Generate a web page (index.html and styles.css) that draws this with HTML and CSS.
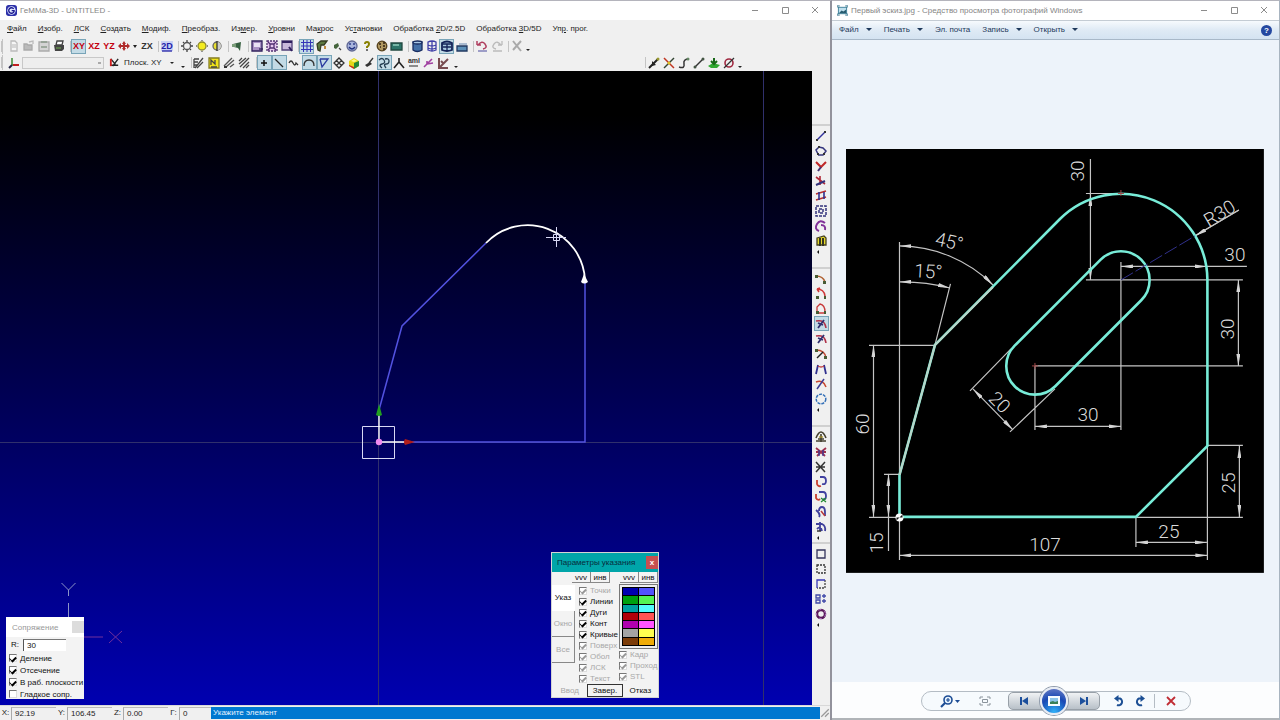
FILE: index.html
```
<!DOCTYPE html>
<html lang="ru">
	<head>
		<meta charset="utf-8">
		<title>ГеММа-3D</title>
		<link rel="stylesheet" href="styles.css">
	</head>
	<body>
		<main class="desktop">
			<!-- CAD -->
			<section class="window cad">
				<header class="titlebar">
					<svg class="app-icon" viewBox="0 0 12 12"><rect width="12" height="12" rx="3" fill="#2b2fa8"/><circle cx="6" cy="6" r="4.6" fill="#dfe6ff"/><path d="M8.4 4.3A3 3 0 1 0 8.8 7V6.2H6.2" fill="none" stroke="#1c1c90" stroke-width="1.5"/></svg>
					<h1>ГеММа-3D - UNTITLED -</h1>
					<div class="win-buttons">
						<button aria-label="Свернуть"><svg viewBox="0 0 10 10"><path d="M2 5.5h6"/></svg></button>
						<button aria-label="Развернуть"><svg viewBox="0 0 10 10"><path d="M2.500 2.500h6v6h-6z"/></svg></button>
						<button aria-label="Закрыть"><svg viewBox="0 0 10 10"><path d="M2 2l6 6M8 2l-6 6"/></svg></button>
					</div>
				</header>
				<nav class="menu">
					<button><u>Ф</u>айл</button>
					<button><u>И</u>зобр.</button>
					<button><u>Л</u>СК</button>
					<button><u>С</u>оздать</button>
					<button><u>М</u>одиф.</button>
					<button><u>П</u>реобраз.</button>
					<button>Из<u>м</u>ер.</button>
					<button><u>У</u>ровни</button>
					<button>Ма<u>к</u>рос</button>
					<button>Ус<u>т</u>ановки</button>
					<button>Обработка <u>2</u>D/2.5D</button>
					<button>Обработка <u>3</u>D/5D</button>
					<button>Уп<u>р</u>. прог.</button>
				</nav>
				<div class="toolbar">
					<div class="group first" data-icons="new open save print"></div>
					<div class="group" data-icons="*xy xz yz move drop zx"></div>
					<div class="group" data-icons="2d"></div>
					<div class="group" data-icons="sun bulb half"></div>
					<div class="group" data-icons="leaf"></div>
					<div class="group" data-icons="screen frame view"></div>
					<div class="group" data-icons="*grid layer pen face help cookie card"></div>
					<div class="group" data-icons="cyl wire *book flat"></div>
					<div class="group" data-icons="undo redo"></div>
					<div class="group" data-icons="cut more"></div>
				</div>
				<div class="toolbar">
					<div class="group first" data-icons="axis"></div>
					<select class="lcs" aria-label="ЛСК"><option></option></select>
					<button class="plane"><svg viewBox="0 0 12 12"><path d="M2 2l5 6M2 9h8M4 10l6-8" stroke="#222" stroke-width="1.5"/><path d="M2 2v8" stroke="#d02020" stroke-width="2"/></svg>Плоск. XY <i></i></button>
					<div class="group plain" data-icons="more"></div>
					<div class="group" data-icons="hatch nc brush lines"></div>
					<div class="group" data-icons="*plus *line wave *arc *tri diamond cube dart *spiral angle aml branch fan more"></div>
					<div class="group snaps" data-icons="snap cross curve seg hill nosnap more"></div>
				</div>
				<div class="work">
					<div class="canvas">
						<svg class="drawing" viewBox="0 71 812 634" preserveAspectRatio="xMinYMin slice">
							<path class="guide" d="M378.5 71v634M763.5 71v634M0 442.5h812"/>
							<path class="contour" d="M379 410L402 326L486 243M585 282V442H412"/>
							<path class="picked" d="M486 243A57.5 57.5 0 0 1 585 280"/>
							<path d="M584 274l-3 8q3 3 7 0z" fill="#fff"/>
							<path class="cursor" d="M556.5 227v20M546 237.5h20M553.5 234.5h6v6h-6z"/>
							<path class="cursor" d="M362.5 426.5h32v32h-32z"/>
							<path d="M379 442v-28M379 442h26" stroke="#fff" stroke-width="1.4"/>
							<path d="M379 404l3 11q-3 2-6 0z" fill="#22a020"/>
							<path d="M415 442l-10-3q-2 3 0 6z" fill="#b01c18"/>
							<circle cx="379" cy="442" r="3.2" fill="#f08af0"/>
							<path class="axis-y" d="M61.500 583l7 7 7-7M68.500 590v6M68.500 603v14"/>
							<path class="axis-x" d="M84 637h19M109 631l13 12M122 631l-13 12"/>
						</svg>

						<form class="panel fillet">
							<div class="panel-title">Сопряжение<button type="button" aria-label="Закрыть"></button></div>
							<label class="radius">R: <input type="text" value="30"></label>
							<label><input type="checkbox" checked>Деление</label>
							<label><input type="checkbox" checked>Отсечение</label>
							<label><input type="checkbox" checked>В раб. плоскости</label>
							<label><input type="checkbox">Гладкое сопр.</label>
						</form>

						<form class="panel pick">
							<div class="panel-title">Параметры указания<button type="button" aria-label="Закрыть">x</button></div>
							<div class="pick-heads">
								<button type="button">vvv</button><button type="button">инв</button>
								<button type="button" class="apart">vvv</button><button type="button">инв</button>
							</div>
							<div class="pick-body">
								<div class="tabs">
									<button type="button" class="on">Указ</button>
									<button type="button" disabled>Окно</button>
									<button type="button" disabled>Все</button>
								</div>
								<div class="kinds">
									<label class="off"><input type="checkbox" checked disabled>Точки</label>
									<label><input type="checkbox" checked>Линии</label>
									<label><input type="checkbox" checked>Дуги</label>
									<label><input type="checkbox" checked>Конт</label>
									<label><input type="checkbox" checked>Кривые</label>
									<label class="off"><input type="checkbox" checked disabled>Поверх</label>
									<label class="off"><input type="checkbox" checked disabled>Обол</label>
									<label class="off"><input type="checkbox" checked disabled>ЛСК</label>
									<label class="off"><input type="checkbox" checked disabled>Текст</label>
								</div>
								<div class="kinds">
									<div class="palette">
										<b class="navy"></b><b class="blue"></b>
										<b class="green"></b><b class="lime"></b>
										<b class="teal"></b><b class="aqua"></b>
										<b class="red"></b><b class="coral"></b>
										<b class="purple"></b><b class="pink"></b>
										<b class="grey"></b><b class="yellow"></b>
										<b class="brown"></b><b class="orange"></b>
									</div>
									<label class="off"><input type="checkbox" checked disabled>Кадр</label>
									<label class="off"><input type="checkbox" checked disabled>Проход</label>
									<label class="off"><input type="checkbox" checked disabled>STL</label>
								</div>
							</div>
							<div class="pick-foot">
								<button type="button" disabled>Ввод</button>
								<button type="button" class="default">Завер.</button>
								<button type="button">Отказ</button>
							</div>
						</form>
					</div>
					<aside class="sidebar">
						<div class="group" data-icons="vline poly trim fork para region loop block back"></div>
						<div class="group" data-icons="arc1 arc2 arc3 *fillet fillet arc4 legs split ring back"></div>
						<div class="group mid" data-icons="tree bug scis hook1 hook2 hook3 hook4 back"></div>
						<div class="group" data-icons="sq sqdot sqmix nodes torus back"></div>
					</aside>
				</div>
				<footer class="status">
					<span>X:</span><output>92.19</output>
					<span>Y:</span><output>106.45</output>
					<span>Z:</span><output>0.00</output>
					<span>Г:</span><output class="short">0</output>
					<p>Укажите элемент</p>
					<svg class="size-grip" viewBox="0 0 8 8"><path d="M7 1L1 7M7 4L4 7" stroke="#999"/></svg>
				</footer>
			</section>

			<!-- просмотр фотографий -->
			<section class="window viewer">
				<header class="titlebar">
					<svg class="app-icon" viewBox="0 0 12 12"><rect x="1.500" y="2.500" width="9" height="7" fill="#bfe0ee" stroke="#3c7f98"/><path d="M2 9l3-3 2 1 3-2v4z" fill="#285c70"/><path d="M0 3V1h3M9 1h3v2M0 9v2h3M9 11h3V9" fill="none" stroke="#2c6f88"/></svg>
					<h1>Первый эскиз.jpg - Средство просмотра фотографий Windows</h1>
					<div class="win-buttons">
						<button aria-label="Свернуть"><svg viewBox="0 0 10 10"><path d="M2 5.500h6"/></svg></button>
						<button aria-label="Развернуть"><svg viewBox="0 0 10 10"><path d="M2.500 2.500h6v6h-6z"/></svg></button>
						<button aria-label="Закрыть"><svg viewBox="0 0 10 10"><path d="M2 2l6 6M8 2l-6 6"/></svg></button>
					</div>
				</header>
				<nav class="viewer-menu">
					<button>Файл<i></i></button>
					<button>Печать<i></i></button>
					<button>Эл. почта</button>
					<button>Запись<i></i></button>
					<button>Открыть<i></i></button>
					<button class="help" aria-label="Справка">?</button>
				</nav>
				<div class="photo">
					<svg viewBox="846 149 418 424">
						<defs>
							<marker id="arrow" viewBox="0 0 12 4" refX="12" refY="2" markerWidth="12" markerHeight="4" markerUnits="userSpaceOnUse" orient="auto-start-reverse"><path d="M12 2L0 0v4z" fill="#d4d4d4"/></marker>
						</defs>
						<rect x="846" y="149" width="418" height="424"/>
						<g class="dim">
							<path d="M899.500 242V560M869 345.500h66M869 517.500h374M884 474.500h16M1207.500 446v114M1136 517v30M1207 445.500h36M1035 366h208M1121 262v168M1035 366v64M1086 280h157M1086 193.500h35M935 345l15.500-61M1011 349l-41 42M1055 389l-45 43M1090.500 159v36M1207 266.500h40M888.500 516v35M1195 236l44-26"/>
							<g marker-start="url(#arrow)" marker-end="url(#arrow)">
								<path d="M899.500 246A134 134 0 0 1 993 285"/>
								<path d="M899.500 282A193 193 0 0 1 950 288"/>
								<path d="M1090.500 194v86"/>
								<path d="M1121 266.500h86"/>
								<path d="M1238.500 280v86"/>
								<path d="M1035 426.500h86"/>
								<path d="M973 389l40 41"/>
								<path d="M873.500 345v172"/>
								<path d="M888.500 474v43"/>
								<path d="M899.500 555.500h308"/>
								<path d="M1136 542.500h71"/>
								<path d="M1239.500 446v71"/>
							</g>
							<path d="M1239 210L1195 236" marker-end="url(#arrow)"/>
						</g>
						<path class="part" d="M899.500 517V475L935 345L1060 219A86.500 86.500 0 0 1 1207.500 280V446L1136 517Z"/>
						<path class="part" d="M1100.700 259.700A28.700 28.700 0 0 1 1141.300 300.300L1055.300 386.300A28.700 28.700 0 0 1 1014.700 345.700Z"/>
						<path d="M899.500 475L935 345L993 287" fill="none" stroke="#b9d5c8" stroke-width="2"/>
						<path d="M1121 280L1195 236" stroke="#30308c" stroke-dasharray="14 3"/>
						<path d="M1118 193.500h6M1121 190v6M1032 366h6M1035 363v6" stroke="#a04848"/>
						<circle cx="899.500" cy="517.500" r="4" fill="#fff"/>
						<path d="M899.500 517.500h3v-3zM899.500 517.500h-3v3z" fill="#111"/>
						<g class="dim-text">
							<text transform="translate(1084 171) rotate(-90)">30</text>
							<text x="1235" y="261">30</text>
							<text transform="translate(1234 329) rotate(-90)">30</text>
							<text transform="translate(869 424) rotate(-90)">60</text>
							<text transform="translate(883 543) rotate(-90)">15</text>
							<text transform="translate(1235 483) rotate(-90)">25</text>
							<text x="1088" y="421">30</text>
							<text x="1045" y="551">107</text>
							<text x="1169" y="538">25</text>
							<text transform="translate(928 278) rotate(3)">15°</text>
							<text transform="translate(948 248) rotate(12)">45°</text>
							<text transform="translate(995 407) rotate(45)">20</text>
							<text transform="translate(1223 219) rotate(-31)">R30</text>
						</g>
					</svg>
				</div>
				<footer class="controls">
					<div class="pill">
						<button aria-label="Масштаб"><svg class="wide" viewBox="0 0 20 14"><circle cx="8" cy="6" r="4" fill="#e8f4ff" stroke="#1c4c94" stroke-width="1.600"/><path d="M5 9l-4 4" stroke="#1c4c94" stroke-width="2.200"/><path d="M6 6h4M8 4v4" stroke="#1c4c94" stroke-width="1.200"/><path d="M15 6h5l-2.500 3z" fill="#1c4c94"/></svg></button>
						<button class="fit" aria-label="По размеру окна"><svg viewBox="0 0 14 14"><path d="M2 5V3h3M9 3h3v2M2 9v2h3M9 11h3V9M4.500 5.500h5v3h-5z" fill="none" stroke="#8b949c"/></svg></button>
						<div class="player">
							<button aria-label="Назад"><svg viewBox="0 0 14 14"><path d="M3 3h2v8H3zM11 3v8L5 7z" fill="#1c4f9c"/></svg></button>
							<button class="show" aria-label="Показ слайдов"><svg viewBox="0 0 14 14"><path d="M1 2h12v10H1z" fill="#f6fbff"/><path d="M3 4h8v6H3z" fill="#8cc4e8"/><path d="M3 10V8l3-1 2 1 3-1v3z" fill="#3a8058"/></svg></button>
							<button aria-label="Вперед"><svg viewBox="0 0 14 14"><path d="M9 3h2v8H9zM3 3v8l6-4z" fill="#1c4f9c"/></svg></button>
						</div>
						<button aria-label="Повернуть влево"><svg viewBox="0 0 14 14"><path d="M5 4.500H8a3.500 3.500 0 1 1-3 6.500" fill="none" stroke="#1c4f94" stroke-width="2"/><path d="M2 4.500L6.500 1v7z" fill="#1c4f94"/></svg></button>
						<button aria-label="Повернуть вправо"><svg viewBox="0 0 14 14"><path d="M9 4.500H6a3.500 3.500 0 1 0 3 6.500" fill="none" stroke="#1c4f94" stroke-width="2"/><path d="M12 4.500L7.500 1v7z" fill="#1c4f94"/></svg></button>
						<button class="delete" aria-label="Удалить"><svg viewBox="0 0 14 14"><path d="M3 3l8 8M11 3l-8 8" stroke="#c02c34" stroke-width="1.800"/></svg></button>
					</div>
				</footer>
			</section>
		</main>
		<script src="toolbar.js"></script>
	</body>
</html>
```
FILE: styles.css
```
*{
	box-sizing: border-box;
	margin: 0;
	padding: 0;
}
body{
	font: 8px/12px "Liberation Sans", sans-serif;
	color: #222;
	background-color: #f0f0f0;
}
button, input, select{
	font: inherit;
	color: inherit;
	border: none;
	background: none;
}
.desktop{
	display: flex;
	height: 100vh;
	min-height: 640px;
}
.window{
	display: flex;
	flex-direction: column;
	min-width: 0;
	border-top: 1px solid #b4b4bc;
}
.cad{
	flex: 0 0 65%;
	background-color: #f0f0f0;
	border-right: 2px solid #92929c;
}
.viewer{
	flex: 1;
	background-color: #edf3fa;
	border-right: 1px solid #a8b4c0;
}

/* заголовок */
.titlebar{
	display: flex;
	align-items: center;
	height: 19px;
	padding-left: 6px;
	background-color: #fff;
	color: #858585;
}
.titlebar h1{
	flex: 1;
	font-size: 8px;
	font-weight: normal;
	white-space: nowrap;
}
.app-icon{
	width: 11px;
	height: 11px;
	margin-right: 3px;
}
.win-buttons{
	display: flex;
}
.win-buttons button{
	width: 30px;
	height: 18px;
}
.win-buttons svg{
	width: 10px;
	height: 10px;
	fill: none;
	stroke: #8c8c8c;
	vertical-align: middle;
}
.viewer .titlebar{
	padding-left: 5px;
}

/* меню */
.menu{
	display: flex;
	gap: 11px;
	height: 18px;
	padding-left: 7px;
	white-space: nowrap;
}

/* панели инструментов */
.toolbar{
	display: flex;
	align-items: center;
	gap: 5px;
	height: 16px;
	padding-left: 2px;
}
.toolbar + .toolbar{
	height: 17px;
}
.group{
	display: flex;
	align-items: center;
}
.toolbar .group{
	box-shadow: -3px 0 0 -2px #c4c4c4;
}
.toolbar .group.first{
	padding-left: 3px;
	border-left: 1px solid #c4c4c4;
}
.toolbar .plain{
	box-shadow: none;
}
.tool{
	display: flex;
	align-items: center;
	justify-content: center;
	width: 15px;
	height: 15px;
}
.tool svg{
	flex: none;
	width: 12px;
	height: 12px;
	fill: none;
	stroke-width: 1.3;
	overflow: visible;
}
.tool text{
	font: bold 9px "Liberation Sans", sans-serif;
	text-anchor: middle;
}
.tool .small{
	font-size: 7px;
}
.tool.narrow{
	width: 8px;
}
.tool.pressed{
	background-color: #c3dbe6;
	box-shadow: inset 0 0 0 1px #78a4b8;
}
.lcs{
	appearance: none;
	width: 82px;
	height: 12px;
	margin-left: -4px;
	border: 1px solid #c8c8c8;
	background: linear-gradient(#aaa, #aaa) no-repeat 75px 4px/3px 2px #eee;
}
.plane{
	display: flex;
	align-items: center;
	white-space: nowrap;
}
.plane svg{
	width: 11px;
	height: 11px;
	margin-right: 4px;
}
.plane i{
	margin-left: 8px;
	border: 2px solid transparent;
	border-top-color: #222;
	border-bottom: none;
}
.snaps{
	margin-left: auto;
	margin-right: 86px;
}

/* рабочее поле */
.work{
	display: flex;
	flex: 1;
	min-height: 0;
}
.canvas{
	flex: 1;
	position: relative;
	overflow: hidden;
	background: linear-gradient(#000 7%, #0000b0);
}
.drawing{
	display: block;
	width: 100%;
	height: 100%;
	fill: none;
}
.guide{
	stroke: #30306c;
}
.contour{
	stroke: #5252e0;
	stroke-width: 1.5;
}
.picked{
	stroke: #fff;
	stroke-width: 1.8;
}
.cursor{
	stroke: #d8d8f4;
}
.axis-y{
	stroke: #8c94c8;
}
.axis-x{
	stroke: #70309c;
}
.sidebar{
	width: 18px;
	padding-top: 53px;
	background-color: #f0f0f0;
}
.sidebar .group{
	flex-direction: column;
	padding-top: 2px;
	margin-bottom: 11px;
	border-top: 2px solid #d0d0d0;
}
.sidebar .narrow{
	height: 8px;
}
.sidebar .mid{
	margin-bottom: 0;
}

/* плавающие окна */
.panel{
	position: absolute;
	line-height: 11px;
	background-color: #f3f3f3;
	color: #111;
}
.panel-title{
	display: flex;
	align-items: center;
	justify-content: space-between;
}
.panel label{
	display: flex;
	align-items: center;
	white-space: nowrap;
}
.panel input[type=checkbox]{
	appearance: none;
	display: grid;
	place-content: center;
	flex: none;
	width: 8px;
	height: 8px;
	margin-right: 3px;
	border: 1px solid #777;
	border-right-color: #ddd;
	border-bottom-color: #ddd;
	background-color: #fff;
}
.panel input:checked::before{
	content: "";
	width: 5px;
	height: 3px;
	border-left: 1px solid #000;
	border-bottom: 2px solid #000;
	transform: rotate(-45deg);
}
.panel .off, .panel button:disabled{
	color: #a8a8a8;
}
.panel .off input::before{
	border-color: #999;
}
.fillet{
	left: 6px;
	bottom: 6px;
	width: 78px;
	height: 82px;
	overflow: hidden;
}
.fillet .panel-title{
	height: 20px;
	padding-left: 6px;
	background-color: #fff;
	color: #999;
}
.fillet .panel-title button{
	width: 12px;
	height: 12px;
	background-color: #dcdcdc;
}
.fillet label{
	height: 12px;
	padding-left: 3px;
}
.fillet .radius{
	height: 15px;
	padding-left: 5px;
	gap: 4px;
}
.radius input{
	width: 43px;
	height: 12px;
	padding-left: 3px;
	border-left: 1px solid #555;
	border-top: 1px solid #777;
	background-color: #fff;
}
.pick{
	left: 551px;
	bottom: 7px;
	width: 108px;
	border: 1px solid #d4d4d4;
}
.pick .panel-title{
	height: 19px;
	padding-left: 5px;
	background-color: #00a5a9;
	color: #082c3c;
}
.pick .panel-title button{
	width: 12px;
	height: 13px;
	background-color: #c75050;
	color: #fff;
	font-weight: bold;
}
.pick-heads{
	display: flex;
	justify-content: flex-end;
	height: 11px;
}
.pick-heads button{
	width: 19px;
	border-right: 1px solid #888;
	border-bottom: 1px solid #888;
	line-height: 9px;
}
.pick-heads .apart{
	margin-left: 10px;
}
.pick-body{
	display: grid;
	grid-template-columns: 23px 36px 39px;
	gap: 4px;
	padding-top: 2px;
}
.tabs button{
	display: block;
	width: 23px;
	height: 26px;
	border-right: 1px solid #888;
	border-bottom: 1px solid #888;
}
.tabs .on{
	background-color: #fff;
	border-color: #fff;
}
.kinds label{
	height: 11px;
}
.palette{
	display: grid;
	grid-template-columns: 1fr 1fr;
	gap: 1px;
	height: 65px;
	margin-top: -1px;
	padding: 3px;
	border: 1px solid #777;
	background: #eee;
}
.palette b{
	box-shadow: 0 0 0 1px #000;
}
.navy{background-color: #0000b0;}
.blue{background-color: #5252ff;}
.green{background-color: #00a010;}
.lime{background-color: #54f454;}
.teal{background-color: #00a0a0;}
.aqua{background-color: #54fcfc;}
.red{background-color: #b00008;}
.coral{background-color: #ff5454;}
.purple{background-color: #b000b0;}
.pink{background-color: #ff54ff;}
.grey{background-color: #a4a4a4;}
.yellow{background-color: #ffff50;}
.brown{background-color: #7c3c08;}
.orange{background-color: #f0ac08;}
.pick-foot{
	display: grid;
	grid-template-columns: 1fr 1fr 1fr;
	height: 13px;
}
.pick-foot .default{
	border: 1px solid #333;
}

/* строка состояния */
.status{
	display: flex;
	align-items: center;
	height: 15px;
	border-top: 1px solid #d8d8d8;
}
.status span{
	width: 11px;
	text-align: center;
}
.status output{
	width: 45px;
	height: 13px;
	padding-left: 3px;
	border-left: 1px solid #aaa;
	border-top: 1px solid #bbb;
}
.status .short{
	width: 32px;
}
.status p{
	flex: 1;
	padding-left: 2px;
	background-color: #0078d0;
	color: #e4f2ff;
}
.size-grip{
	width: 10px;
	height: 10px;
}

/* просмотр */
.viewer-menu{
	display: flex;
	align-items: center;
	gap: 12px;
	height: 20px;
	padding: 0 7px;
	border-top: 1px solid #c4ccd4;
	border-bottom: 1px solid #a8b8c8;
	background: linear-gradient(#f6fafd, #dfeaf5 50%, #d4e3f1);
	color: #1e395b;
}
.viewer-menu i{
	display: inline-block;
	margin-left: 7px;
	border: 3px solid transparent;
	border-top-color: #1e395b;
	border-bottom: none;
	vertical-align: middle;
}
.viewer-menu .help{
	width: 11px;
	height: 11px;
	margin-left: auto;
	border-radius: 50%;
	background-color: #2448a0;
	color: #fff;
	font-weight: bold;
	line-height: 11px;
}
.photo{
	flex: 1;
	display: flex;
	align-items: center;
	justify-content: center;
	min-height: 0;
	padding-right: 1px;
}
.photo svg{
	width: 93.7%;
	max-height: 100%;
}
.dim{
	fill: none;
	stroke: #c4c4c4;
	stroke-width: 1.2;
}
.part{
	fill: none;
	stroke: #78ecd8;
	stroke-width: 2.6;
}
.dim-text{
	font: 300 19px "Roboto", sans-serif;
	fill: #dcdcdc;
	text-anchor: middle;
}
.controls{
	display: flex;
	align-items: center;
	justify-content: center;
	height: 38px;
	padding-top: 2px;
	border-bottom: 2px solid #b0b4b8;
	background-color: #fcfdfe;
}
.pill{
	display: flex;
	align-items: center;
	width: 270px;
	height: 20px;
	padding: 0 9px 0 18px;
	border: 1px solid #b4bcc4;
	border-radius: 10px;
	background-color: #f6fafd;
}
.pill svg{
	display: block;
	width: 14px;
	height: 14px;
	margin: auto;
}
.pill .wide{
	width: 20px;
}
.pill > button{
	width: 22px;
}
.pill .fit{
	margin: 0 14px 0 15px;
}
.player{
	display: flex;
	align-items: center;
	justify-content: space-between;
	width: 98px;
	height: 18px;
	margin-left: -2px;
	margin-right: 9px;
	border: 1px solid #98a0a8;
	border-radius: 5px;
	background: linear-gradient(#f0f2f4, #b8c0c8);
}
.player button{
	width: 30px;
}
.player .show{
	width: 28px;
	height: 28px;
	margin: -5px 0;
	border: 2px solid #e8ecf4;
	border-radius: 50%;
	background: radial-gradient(circle at 50% 95%, #30b0f8, #1848b4 55%, #7484c8);
	box-shadow: 0 0 0 1px #909cac;
}
.pill .delete{
	margin-left: 4px;
	padding-left: 6px;
	border-left: 1px solid #b4bcc4;
	width: 28px;
}
```
FILE: toolbar.js
```
// содержимое значков, поле 12x12
var icons = {
	"new": '<path d="M3 1h4l2 2v8H3z" stroke="#bbb" fill="#f6f6f6"/><path d="M4 5h4M4 7h4" stroke="#ccc"/>',
	open: '<path d="M1 10V4h3l1 1h4v5z" fill="#bbb" stroke="#aaa"/><path d="M6 2l4-1v3" stroke="#bbb"/>',
	save: '<path d="M1 2h10v9H1z" fill="#d4d4d4" stroke="#aaa"/><path d="M3 2h6M3 7h6" stroke="#8a9a8a"/>',
	print: '<path d="M3 5l1-4h6L9 5z" fill="#fff" stroke="#444"/><path d="M1 5h10v4l-2 2H2z" fill="#444"/><path d="M3 8h5" stroke="#6a9a50"/>',
	xy: '<text x="6" y="9" fill="#c40010">XY</text>',
	xz: '<text x="6" y="9" fill="#c40010">XZ</text>',
	yz: '<text x="6" y="9" fill="#c40010">YZ</text>',
	zx: '<text class="mid" x="6" y="9" fill="#333">ZX</text>',
	"2d": '<path d="M0 1h12v10H0z" fill="#c8d0f4"/><text x="6" y="9" fill="#2020a8">2D</text><path d="M1 11h10" stroke="#2020a8"/>',
	move: '<path d="M0 6l3-3v2h2V4H4l2-3 2 3H7v1h2V3l3 3-3 3V7H7v1h1l-2 3-2-3h1V7H3v2z" fill="#b02c2c"/>',
	drop: '<path d="M4 5h4l-2 3z" fill="#222"/>',
	sun: '<circle cx="6" cy="6" r="3.500" stroke="#555"/><path d="M6 0v2M6 10v2M0 6h2M10 6h2M2 2l1 1M9 9l1 1M10 2L9 3M3 9l-1 1" stroke="#444"/>',
	bulb: '<circle cx="6" cy="6" r="4" fill="#f4ec20" stroke="#8c8830"/><path d="M6 0v1M6 11v1M0 6h1M11 6h1" stroke="#666"/>',
	half: '<circle cx="6" cy="6" r="4" fill="#e8e030" stroke="#666"/><path d="M6 2a4 4 0 0 1 0 8" fill="#ccc"/><path d="M6 1v10" stroke="#333"/>',
	leaf: '<path d="M2 4l8-2-1 9-2-3-4-1z" fill="#366040"/><path d="M1 4h4v3H1z" fill="#7a9c78"/>',
	screen: '<path d="M1 1h10v10H1z" fill="#a890c4" stroke="#30205c"/><path d="M3 3h6v4H3z" fill="#e8e0f4"/><path d="M8 9h4" stroke="#30205c"/>',
	frame: '<path d="M1 1h10v10H1z" fill="#e8c8f0" stroke="#503070" stroke-dasharray="2 1"/><path d="M4 4h4v4H4zM2 2l2 2M10 2L8 4M2 10l2-2M10 10L8 8" stroke="#503070"/>',
	view: '<path d="M1 1h10v9H1z" fill="#c8b8dc" stroke="#504078"/><path d="M1 2h10M8 7l3 4" stroke="#302060" stroke-width="2"/>',
	grid: '<path d="M2.500 0v12M6 0v12M9.500 0v12M0 2.500h12M0 6h12M0 9.500h12" stroke="#3434b8" stroke-width="1"/>',
	layer: '<path d="M1 4l4-3h6L8 5H5l-1 6-2-1z" fill="#5c7840" stroke="#343c20"/><path d="M8 6h2v3H8z" fill="#c08c40"/>',
	pen: '<path d="M3 5l4-2 1 3-3 3-2-1z" fill="#44643c"/><path d="M8 8l2 2" stroke="#444"/>',
	face: '<circle cx="6" cy="6" r="5" fill="#a8b4dc" stroke="#606894"/><path d="M3 7q3 4 6 0M4 3v2M8 3v2" stroke="#203080"/>',
	help: '<path d="M4 4q0-2 2-2t2 2-2 3v1" stroke="#888000" stroke-width="2"/><path d="M5 10h2" stroke="#444"/>',
	cookie: '<circle cx="6" cy="6" r="4.800" fill="#b09860" stroke="#54401c"/><path d="M3 4h2M7 3h2M4 7h1M7 6h2M7 9h2" stroke="#302010"/>',
	card: '<path d="M0 3h11v7H0z" fill="#2c7468" stroke="#204840"/><path d="M2 5h6" stroke="#a0d8c8"/>',
	cyl: '<path d="M2 2h9v8q-5 3-9 0z" fill="#4470a8" stroke="#182c60"/><ellipse cx="6.500" cy="2.500" rx="4.500" ry="1.500" fill="#a8c8e8" stroke="#182c60"/>',
	wire: '<path d="M2 2q4-2 8 0v8q-4 2-8 0zM2 5q4 2 8 0M2 8q4 2 8 0M6 1v10" stroke="#4040a8"/>',
	book: '<path d="M1 3q5-3 10 0v7q-5 2-10 0z" fill="#a8c8e0" stroke="#142458" stroke-width="1.800"/><path d="M1 4h10M6 4v7M2 7h8" stroke="#142458"/>',
	flat: '<path d="M1 6h10v5H1z" fill="#5c90b8" stroke="#203860"/><path d="M3 4h8" stroke="#86a0c0"/>',
	undo: '<path d="M1 5h4M1 5V1M2 5q4-5 7-1t-2 5" stroke="#b04060" stroke-width="1.500"/><path d="M2 11h9" stroke="#7070b0"/>',
	redo: '<path d="M11 5H7M11 5V1M10 5Q6 0 3 4t2 5M2 11h9" stroke="#bbb"/>',
	cut: '<path d="M2 1l8 10M10 1L2 10" stroke="#aaa" stroke-width="2"/>',
	more: '<path d="M4 9h4l-2 2z" fill="#222"/>',
	axis: '<path d="M4 1v7h7" stroke="#388830" stroke-width="1.500"/><path d="M4 8l-3 3" stroke="#224" stroke-width="2"/><path d="M5 8h6" stroke="#c02020" stroke-width="2"/>',
	hatch: '<path d="M1 2h5M1 5h4M1 8h3M2 11L10 1M4 11l6-6M1 11V2" stroke="#444"/>',
	nc: '<path d="M1 1h10v10H1z" fill="#f0e418" stroke="#847c20"/><path d="M3 8V3l4 4V3M3 10h6" stroke="#444"/>',
	brush: '<path d="M1 9l8-8M3 10l8-7M7 10l4-3" stroke="#555"/><path d="M1 10h3" stroke="#333" stroke-width="2"/>',
	lines: '<path d="M1 4l3-3M1 7l7-6M2 10l9-9M5 11l6-6M8 11l3-3" stroke="#444"/>',
	plus: '<path d="M6 3v6M3 6h6" stroke="#111" stroke-width="1.500"/>',
	line: '<path d="M2 2l8 8" stroke="#222"/>',
	wave: '<path d="M1 6q2-4 4 0t3 0l2 2" stroke="#333"/>',
	arc: '<path d="M1 9q0-6 5-6t5 6" stroke="#333"/>',
	tri: '<path d="M2 2h8L4 10 2 2" stroke="#2c3ca0"/>',
	diamond: '<path d="M6 1l5 5-5 5-5-5zM3 3l6 6M9 3L3 9" stroke="#333"/>',
	cube: '<path d="M1 4l5-3 5 3v5l-5 3-5-3z" fill="#e4d818"/><path d="M6 6l5-2v5l-5 3z" fill="#248838"/><path d="M1 8l5 2v2L1 9z" fill="#c83020"/><path d="M3 4l3-2 3 2-3 1z" fill="#fff884"/>',
	dart: '<path d="M10 1L6 6" stroke="#333"/><path d="M2 8l5-3 2 2-5 3z" fill="#333"/>',
	spiral: '<path d="M1 3q3-3 5 0t-2 4 0 4M7 2q4-1 4 2t-3 3 0 4" stroke="#243c50"/>',
	angle: '<path d="M6 1v4l-5 6M6 5l5 6" stroke="#222" stroke-width="1.600"/>',
	aml: '<text class="small" x="6" y="6" fill="#333">aml</text><path d="M1 9h9" stroke="#555"/>',
	branch: '<path d="M1 10l8-8M4 7l6-1M4 4v3" stroke="#a040a0" stroke-width="1.600"/>',
	fan: '<path d="M1 1v10h9M1 11l9-9M3 4l3 3" stroke="#784c50" stroke-width="2"/>',
	snap: '<path d="M1 11l9-9" stroke="#222" stroke-width="2"/><path d="M4 4l4 4-4 1z" fill="#222"/><circle cx="10" cy="2" r="1.500" fill="#989830"/>',
	cross: '<path d="M1 1l10 10" stroke="#c03420" stroke-width="1.500"/><path d="M11 1L1 11" stroke="#343" stroke-width="1.500"/><circle cx="6" cy="6" r="1.500" fill="#e0c020"/>',
	curve: '<path d="M1 10q6 2 5-3t5-5" stroke="#333" stroke-width="1.500"/><circle cx="10" cy="2" r="1.500" fill="#686"/>',
	seg: '<path d="M2 10l8-8" stroke="#333" stroke-width="1.500"/><circle cx="2" cy="10" r="1.500" fill="#454"/><circle cx="10" cy="2" r="1.500" fill="#454"/>',
	hill: '<path d="M0 9l5-3 7 2-3 3H3z" fill="#30a830"/><path d="M6 7V1M3 4l3 3 3-3" stroke="#186818" stroke-width="2"/>',
	nosnap: '<circle cx="6" cy="6" r="4" stroke="#a02840" stroke-width="1.600"/><path d="M1 11L11 1" stroke="#333"/>',
	vline: '<path d="M2 10l8-8" stroke="#30309c" stroke-width="1.500"/><path d="M1 9h2v2H1zM9 1h2v2H9z" fill="#333"/>',
	poly: '<path d="M3 9L1 5l3-3 4 1 3 3-3 4H3" stroke="#34347c" stroke-width="1.500"/><path d="M2 8h2v2H2zM3 1h2v2H3zM8 8h2v2H8z" fill="#333"/>',
	trim: '<path d="M1 2l5 5 5-5" stroke="#c02828" stroke-width="2"/><path d="M6 7l-3 4" stroke="#433070" stroke-width="2"/>',
	fork: '<path d="M1 2l9 7M5 1v9" stroke="#b02838" stroke-width="1.600"/><path d="M1 10l9-4" stroke="#34347c" stroke-width="2"/>',
	para: '<path d="M1 4l10-3M1 10l10-3" stroke="#b83030" stroke-width="1.800"/><path d="M4 2v8M9 2v7" stroke="#303090" stroke-width="1.600"/>',
	region: '<path d="M1 1h10v10H1zM4 4h4v4H4z" stroke="#34347c" stroke-width="1.500" stroke-dasharray="3 1"/>',
	loop: '<path d="M10 3Q5-1 2 4t2 7M10 10q1-5-4-5" stroke="#803098" stroke-width="2"/>',
	block: '<path d="M2 3l7-2 2 2v7H2z" fill="#e4d82c" stroke="#444020"/><path d="M5 3v8M8 3v8" stroke="#343420" stroke-width="2"/>',
	back: '<path d="M4 4v4L2 6z" fill="#111"/>',
	arc1: '<path d="M1 3q7 0 9 6" stroke="#b06030" stroke-width="1.600"/><path d="M0 2h3v3H0zM8 8h3v3H8z" fill="#485c34"/>',
	arc2: '<path d="M2 1q7 0 8 7M2 1l3-1M2 1l2 3" stroke="#d03838" stroke-width="1.500"/><path d="M1 8h3v3H1zM9 8h2v3H9z" fill="#485c34"/>',
	arc3: '<path d="M2 8V4l3-3q5 1 5 8M2 10h8" stroke="#c83838" stroke-width="1.300"/><path d="M1 8h3v3H1zM9 8h2v3H9z" fill="#485c34"/>',
	fillet: '<path d="M1 3q9-2 10 7" stroke="#b03048" stroke-width="1.500"/><path d="M3 10l6-8M3 5l5 2" stroke="#303070" stroke-width="1.800"/>',
	arc4: '<path d="M1 2q9 0 10 8" stroke="#c04830" stroke-width="1.500"/><path d="M2 10l6-6" stroke="#222" stroke-width="1.500"/><path d="M0 1h3v3H0zM9 8h3v3H9z" fill="#485c34"/>',
	legs: '<path d="M1 11L3 2M11 11L9 2" stroke="#303090" stroke-width="1.800"/><path d="M3 3q3 2 6 0" stroke="#c04040"/>',
	split: '<path d="M1 4q7-3 10 5" stroke="#c84830" stroke-width="1.500"/><path d="M2 11l7-10" stroke="#3c3c94" stroke-width="1.500"/>',
	ring: '<circle cx="6" cy="6" r="4.800" stroke="#3470b8" stroke-width="1.500" stroke-dasharray="3 1"/>',
	tree: '<path d="M1 7q5-12 10 0M1 10h10M6 3v8M3 8h6" stroke="#444030" stroke-width="1.600"/><path d="M4 6h4" stroke="#a89020"/>',
	bug: '<path d="M1 2l5 4 5-4M2 10l4-4 4 4M1 6h10" stroke="#a0304c" stroke-width="1.800"/><path d="M4 4v6M8 4v6" stroke="#383898"/>',
	scis: '<path d="M1 1l9 10M10 1L1 11M1 6h9" stroke="#333" stroke-width="1.500"/>',
	hook1: '<path d="M5 1h3q3 0 3 4t-4 3" stroke="#4040a0" stroke-width="1.800"/><path d="M2 4v4q1 3 4 2" stroke="#c84030" stroke-width="1.800"/>',
	hook2: '<path d="M4 1h4q3 0 3 4t-3 3" stroke="#4040a0" stroke-width="1.800"/><path d="M1 3v4q2 3 4 1" stroke="#c84030" stroke-width="1.800"/><path d="M6 7l5 4M11 7l-5 4" stroke="#208830"/>',
	hook3: '<path d="M1 4q5 4 3 7M4 5q0-4 3-4t3 5v4" stroke="#40409c" stroke-width="1.800"/><path d="M6 5l4 5" stroke="#b83838" stroke-width="1.500"/>',
	hook4: '<path d="M1 3h6q4 2 3 7M2 8q4-4 5 2M5 1v9" stroke="#40409c" stroke-width="1.800"/><path d="M2 10h4" stroke="#333" stroke-width="1.500"/>',
	sq: '<path d="M2 2h8v8H2z" stroke="#34345c"/>',
	sqdot: '<path d="M2 2h8v8H2z" stroke="#333" stroke-dasharray="2 1"/>',
	sqmix: '<path d="M10 2v8H2" stroke="#444" stroke-dasharray="2 1"/><path d="M2 10V2h8" stroke="#3838b8"/>',
	nodes: '<path d="M1 2h4v3H1zM1 7h4v3H1z" stroke="#4048a8"/><path d="M7 3h4M9 1v4M7 8h4M9 6v4" stroke="#4048a8"/>',
	torus: '<circle cx="6" cy="6" r="4" stroke="#581858" stroke-width="2.500"/><circle cx="6" cy="6" r="4.500" stroke="#b078c0" stroke-width="1" stroke-dasharray="3 3"/>'
};

var groups = document.querySelectorAll(".group");
for(var i=0; i<groups.length; i++){
	var names = groups[i].getAttribute("data-icons").split(" ");
	for(var j=0; j<names.length; j++){
		var pressed = names[j].charAt(0) == "*";
		var name = names[j].replace("*","");
		var btn = document.createElement("button");
		btn.className = "tool" + (pressed ? " pressed" : "");
		if(name == "drop" || name == "more" || name == "back"){
			btn.className += " narrow";
		}
		btn.setAttribute("aria-label",name);
		btn.innerHTML = '<svg viewBox="0 0 12 12">' + icons[name] + '</svg>';
		groups[i].appendChild(btn);
	}
}
```
